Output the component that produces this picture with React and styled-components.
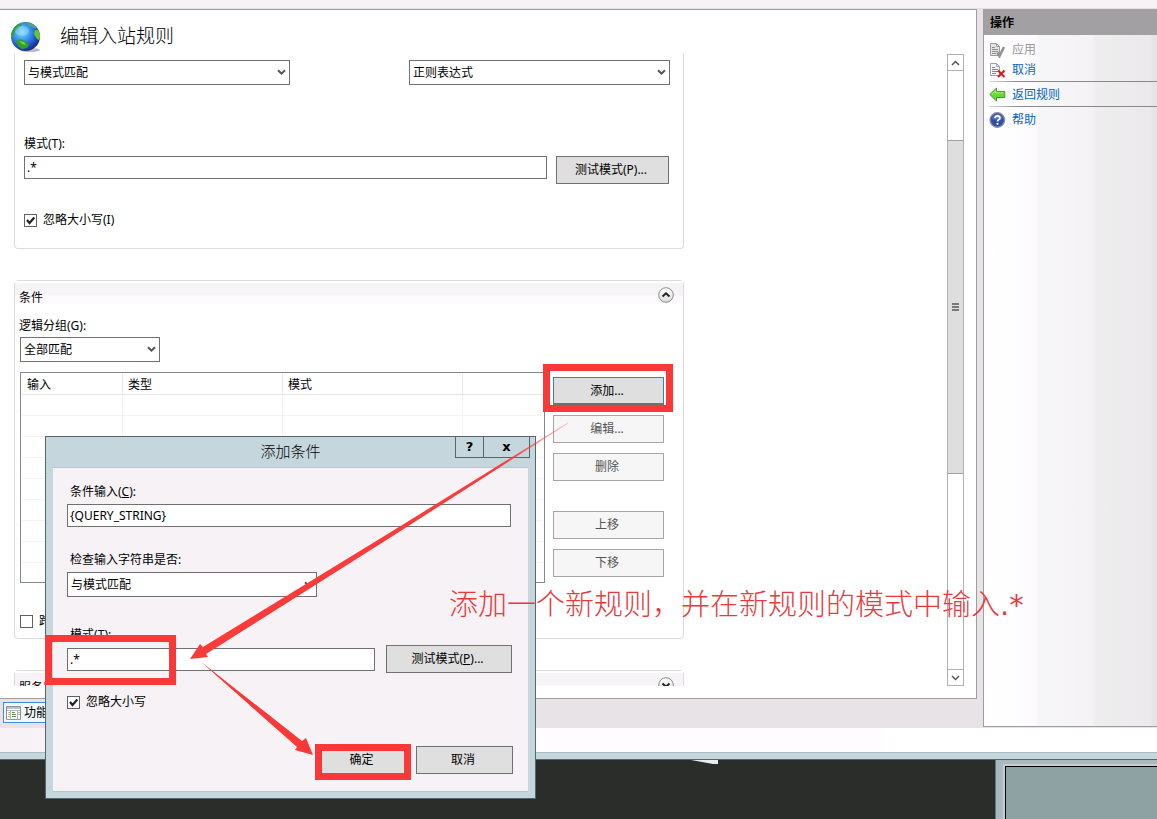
import React from 'react';
import styled, { createGlobalStyle } from 'styled-components';

const GlobalStyle = createGlobalStyle`
	* {
		box-sizing: border-box;
	}

	body {
		margin: 0;
		color: #000;
		font-family: 'Noto Sans', 'Noto Sans CJK SC', sans-serif;
		font-size: 12px;
		line-height: 16px;
	}

	button,
	input,
	select {
		font: inherit;
		color: inherit;
	}
`;

const Screen = styled.div`
	position: relative;
	display: flex;
	flex-direction: column;
	height: 100vh;
	overflow: hidden;
	background: #2b2d2a;
`;

const AppWindow = styled.div`
	flex: 1;
	min-height: 0;
	display: flex;
	flex-direction: column;
	background: #fffcff;
	border-bottom: 1px solid #53666c;
`;

const TopStrip = styled.div`
	height: 9px;
	background: #f6f2f6;
	border-bottom: 1px solid #e4e1e4;
`;

const Workspace = styled.div`
	flex: 1;
	min-height: 0;
	display: grid;
	grid-template-columns: 1fr 174px;
	column-gap: 6px;
	background: #e7e3e6;
`;

const MainColumn = styled.div`
	display: flex;
	flex-direction: column;
	min-height: 0;
`;

const RulePage = styled.main`
	flex: 1;
	min-height: 0;
	display: flex;
	flex-direction: column;
	padding-bottom: 12px;
	background: #fff;
	border: solid #a09da0;
	border-width: 1px 1px 1px 0;
`;

const PageHeader = styled.header`
	display: flex;
	align-items: center;
	flex: none;
	height: 44px;
	padding: 10px 0 0 10px;

	h1 {
		margin: 0 0 2px 18px;
		font-size: 19px;
		font-weight: 300;
		line-height: 24px;
	}
`;

const ScrollArea = styled.div`
	flex: 1;
	min-height: 0;
	display: flex;
	justify-content: space-between;
	padding: 0 12px 0 14px;
`;

const Sections = styled.div`
	width: 670px;
	overflow: hidden;
`;

const Section = styled.section`
	border: 1px solid #dcdcdc;
	border-radius: 4px;
	margin-bottom: 31px;
`;

const PatternSection = styled(Section)`
	border-top: 0;
	border-top-left-radius: 0;
	border-top-right-radius: 0;
	padding: 6px 13px 20px 9px;
`;

const SelectPair = styled.div`
	display: flex;
	justify-content: space-between;
	margin-bottom: 51px;
`;

const SelectWrap = styled.div`
	position: relative;
	width: ${(props) => props.$width}px;

	select {
		appearance: none;
		display: block;
		width: 100%;
		height: 25px;
		padding: 0 20px 0 3px;
		background: #fff;
		border: 1px solid #707070;
		border-radius: 0;
	}

	svg {
		position: absolute;
		right: 4px;
		top: 9px;
		pointer-events: none;
	}
`;

const FieldLabel = styled.label`
	display: block;
	line-height: 16px;
`;

const TextBox = styled.input`
	display: block;
	flex: 1;
	width: 100%;
	min-width: 0;
	height: 23px;
	padding: 0 2px;
	background: #fff;
	border: 1px solid #707070;
	border-radius: 0;
`;

const FieldRow = styled.div`
	display: flex;
	align-items: ${(props) => props.$align || 'center'};
	gap: ${(props) => props.$gap}px;
	margin-top: ${(props) => props.$top}px;
	padding-right: ${(props) => props.$inset || 0}px;
`;

const Button = styled.button`
	flex: none;
	width: ${(props) => props.$width}px;
	height: 28px;
	padding: 0 3px 0 0;
	line-height: 16px;
	background: #dfdfdf;
	border: 1px solid #707070;

	&:disabled {
		color: #555;
		background: #f6f6f6;
		border-color: #a5a5a8;
	}
`;

const AddButton = styled(Button)`
	border-color: #3c7fb1 #3c7fb1 #707070;
	box-shadow: inset 0 -1px #707070;
`;

const CheckLabel = styled.label`
	display: flex;
	align-items: center;
	gap: 6px;
	height: 16px;
	margin-top: ${(props) => props.$top}px;
	white-space: nowrap;

	span {
		display: grid;
	}

	input {
		appearance: none;
		grid-area: 1 / 1;
		width: 13px;
		height: 13px;
		margin: 0;
		background: #fff;
		border: 1px solid #606060;
	}

	svg {
		grid-area: 1 / 1;
		pointer-events: none;
	}
`;

const SectionHeader = styled.div`
	display: flex;
	align-items: center;
	justify-content: space-between;
	height: 28px;
	padding: 0 9px 0 4px;
	background: linear-gradient(#fff 2px, #f7f4f8 2px, #f7f4f8 14px, #fdfbfd 15px, #fdfbfd 22px, #fff 23px);

	h2 {
		margin: 6px 0 0;
		font-size: 12px;
		font-weight: 400;
		line-height: 16px;
	}

	button {
		display: block;
		width: 16px;
		height: 16px;
		padding: 0;
		background: none;
		border: 0;
	}

	svg {
		display: block;
	}
`;

const ConditionBody = styled.div`
	padding: 9px 19px 9px 5px;

	> label {
		margin-left: -1px;
	}

	> label:last-child {
		margin-left: 0;
	}
`;

const ConditionGrid = styled.div`
	display: grid;
	grid-template-columns: 1fr 111px;
	column-gap: 8px;
	margin-top: 10px;
`;

const ConditionTable = styled.table`
	width: 100%;
	height: 211px;
	padding: 1px;
	table-layout: fixed;
	border: 1px solid #828790;
	border-spacing: 0;

	th {
		height: 21px;
		padding: 1px 5px 0;
		font-weight: 400;
		text-align: left;
		border: solid #e5e5e5;
		border-width: 0 1px 1px 0;
	}

	th:last-child,
	td:last-child {
		border-right: 0;
	}

	td {
		height: 21px;
		padding: 0;
		border: solid #f3f3f3;
		border-width: 0 1px 1px 0;
	}

	tr:last-child td {
		height: auto;
		border-bottom: 0;
	}
`;

const ButtonColumn = styled.div`
	display: flex;
	flex-direction: column;
	gap: 10px;
	padding-top: 5px;

	button:nth-child(4) {
		margin-top: 20px;
	}
`;

const ScrollBar = styled.div`
	display: flex;
	flex-direction: column;
	width: 17px;
	border: 1px solid #b0b0b0;

	button {
		display: grid;
		place-items: center;
		flex: none;
		height: 16px;
		padding: 0;
		background: #fff;
		border: 0 solid #b0b0b0;
	}

	button:first-child {
		border-bottom-width: 1px;
	}

	button:last-child {
		border-top-width: 1px;
	}
`;

const Track = styled.div`
	flex: 1;
	display: grid;
	grid-template-rows: 69fr 334fr 195fr;
`;

const Thumb = styled.div`
	grid-row: 2;
	display: grid;
	place-items: center;
	background: #dedede;
	border: solid #a0a0a0;
	border-width: 1px 0;
`;

const ViewTabs = styled.div`
	display: flex;
	flex: none;
	height: 29px;
	padding: 3px;
`;

const ViewTab = styled.button`
	display: flex;
	align-items: center;
	gap: 2px;
	height: 21px;
	padding: 0 4px 0 1px;
	background: #f2f7fb;
	border: 1px solid #3d8fdc;
`;

const ActionsPane = styled.aside`
	margin-bottom: 1px;
	background: linear-gradient(
		90deg,
		#fff 0,
		#fdfbfe 50px,
		#f6f6f7 56px,
		#f5f2f5 108px,
		#eeeeee 112px,
		#ece9ec 166px,
		#e5e3e5 170px
	);
	border: solid #a09da0;
	border-width: 0 0 1px 1px;

	h2 {
		margin: 0;
		padding: 6px 6px 4px;
		font-size: 12px;
		line-height: 16px;
		background: #a3a0a3;
	}

	ul {
		margin: 0;
		padding: 5px 0 0 5px;
		list-style: none;
	}

	li {
		height: 20px;
	}

	li:nth-child(2) {
		height: 21px;
	}

	li.divided {
		height: 25px;
		padding-top: 3px;
		border-top: 1px solid;
		border-image: linear-gradient(90deg, #ddd, #8a888a 30px) 1;
	}
`;

const ActionLink = styled.a`
	display: flex;
	align-items: center;
	gap: 6px;
	height: 20px;
	color: ${(props) => (props.$disabled ? '#9a979a' : '#0563c1')};
	text-decoration: none;
`;

const StatusBar = styled.div`
	flex: none;
	height: 24px;
	background: linear-gradient(90deg, #f6f2f6 0, #fffcff 45%, #fffcff 76%, #fff 77%);
`;

const WindowFrame = styled.div`
	flex: none;
	height: 7px;
	background: #c5d6dc;
	border-top: 1px solid #a9bcc3;
`;

const Desktop = styled.div`
	flex: none;
	display: flex;
	justify-content: flex-end;
	height: 59px;
`;

const DesktopMark = styled.svg`
	margin-right: 276px;
`;

const BackWindow = styled.div`
	width: 162px;
	padding: 6px 0 0 9px;
	background: #a9b9bf;
	border-left: 1px solid #60757c;

	div {
		height: 100%;
		background: #8ea2a4;
		border: solid #000;
		border-width: 1px 0 0 1px;
		box-shadow: 0 0 0 2px #c5ced2;
	}
`;

const Dialog = styled.div`
	position: absolute;
	left: 45px;
	top: 436px;
	width: 491px;
	padding: 0 7px 6px;
	background: #c5d6dc;
	border: 1px solid #53666c;
`;

const DialogBar = styled.div`
	display: grid;
	grid-template-columns: 75px 1fr 75px;
	height: 30px;

	h2 {
		grid-column: 2;
		margin: 4px 0 0;
		font-size: 15px;
		font-weight: 300;
		line-height: 20px;
		text-align: center;
	}

	div {
		display: flex;
		justify-content: flex-end;
		height: 21px;
		margin-right: -2px;
	}
`;

const CaptionButton = styled.button`
	width: ${(props) => props.$width}px;
	padding: 0;
	font-family: 'DejaVu Sans', sans-serif;
	font-size: 13px;
	font-weight: 700;
	background: transparent;
	border: solid #53666c;
	border-width: 0 1px 1px 0;

	&:first-child {
		border-left-width: 1px;
	}
`;

const DialogBody = styled.form`
	padding: 16px 15px 17px 14px;
	background: #f6f2f6;
	border-top: 1px solid #b5c4ca;
	border-bottom: 1px solid #b5c4ca;
`;

const DialogField = styled.div`
	margin-bottom: ${(props) => props.$bottom}px;
	padding-right: 2px;

	label {
		padding-left: 3px;
		margin-bottom: 4px;
	}
`;

const DialogActions = styled.div`
	display: flex;
	justify-content: flex-end;
	gap: 8px;
	margin-top: 36px;
`;

const Markup = styled.svg`
	position: absolute;
	left: 0;
	top: 0;
	pointer-events: none;
`;

const MarkupNote = styled.p`
	position: absolute;
	left: 449px;
	top: 584px;
	margin: 0;
	color: #e8393c;
	font-family: 'Noto Sans CJK SC', sans-serif;
	font-size: 29px;
	font-weight: 300;
	line-height: 36px;
	white-space: nowrap;
	pointer-events: none;

	span {
		font-family: 'DejaVu Sans', sans-serif;
		font-weight: 400;
	}
`;

const SelectArrow = () => (
	<svg width='9' height='7' viewBox='0 0 9 7'>
		<path d='M1 1.2 L4.5 4.7 L8 1.2' fill='none' stroke='#555' strokeWidth='2' />
	</svg>
);

const Select = ({ id, label, width, value }) => (
	<SelectWrap $width={width}>
		<select id={id} aria-label={label} defaultValue={value}>
			<option>{value}</option>
		</select>
		<SelectArrow />
	</SelectWrap>
);

const Check = ({ top, checked, children }) => (
	<CheckLabel $top={top}>
		<span>
			<input type='checkbox' defaultChecked={checked} />
			{checked && (
				<svg width='13' height='13' viewBox='0 0 13 13'>
					<path d='M3 6 L5.5 9 L10.3 3.5' fill='none' stroke='#222' strokeWidth='2.2' />
				</svg>
			)}
		</span>
		{children}
	</CheckLabel>
);

const RoundChevron = ({ up }) => (
	<svg width='16' height='16' viewBox='0 0 16 16'>
		<defs>
			<linearGradient id='round' x1='0' y1='0' x2='0' y2='1'>
				<stop offset='0' stopColor='#fff' />
				<stop offset='1' stopColor='#dcdcdc' />
			</linearGradient>
		</defs>
		<circle cx='8' cy='8' r='7.3' fill='url(#round)' stroke='#8c8c8c' />
		<path
			d={up ? 'M4.5 9.5 L8 6.3 L11.5 9.5' : 'M4.5 6.5 L8 9.7 L11.5 6.5'}
			fill='none'
			stroke='#222'
			strokeWidth='2'
		/>
	</svg>
);

const Globe = () => (
	<svg width='32' height='32' viewBox='0 0 32 32'>
		<defs>
			<radialGradient id='sea' cx='0.38' cy='0.35' r='0.68'>
				<stop offset='0' stopColor='#7fdcfc' />
				<stop offset='0.4' stopColor='#3a9aee' />
				<stop offset='0.75' stopColor='#2450cc' />
				<stop offset='1' stopColor='#172a80' />
			</radialGradient>
			<linearGradient id='land' x1='0' y1='0' x2='1' y2='1'>
				<stop offset='0' stopColor='#2f8f4a' />
				<stop offset='1' stopColor='#3fae4a' />
			</linearGradient>
			<clipPath id='disc'>
				<circle cx='15.5' cy='15.5' r='14.5' />
			</clipPath>
		</defs>
		<ellipse cx='20' cy='29' rx='10' ry='2' fill='#b8bcc4' />
		<circle cx='15.5' cy='15.5' r='14.5' fill='url(#sea)' />
		<g clipPath='url(#disc)'>
			<path d='M0 16 L2 8 L7 3 L12 2 L11 5 L9 6 L7 9 L5 10 L4 14 L2 18z' fill='url(#land)' />
			<path d='M15 0 L22 1 L27 6 L25 8 L22 6 L19 5 L17 3z' fill='#49a58b' />
			<path d='M25 9 L28 9 L31 15 L29 19 L27 18 L24 13z' fill='#62c62e' />
			<path d='M6 20 L10 18 L15 20 L19 24 L17 27 L12 28 L8 25z' fill='#2fa12b' />
			<path d='M9 20 L14 21 L16 24 L12 23z' fill='#7ad23c' />
			<ellipse cx='12' cy='10' rx='7' ry='5' fill='#c5f3ff' opacity='0.3' />
		</g>
	</svg>
);

const PageIcon = ({ gray }) => (
	<>
		<path d='M1.5 1.5 h6 l3 3 v9 h-9z' fill={gray ? '#e4e4e4' : '#f4f8fb'} stroke={gray ? '#9b9b9b' : '#98a4ad'} />
		<path d='M7.5 1.5 v3 h3' fill='none' stroke={gray ? '#9b9b9b' : '#98a4ad'} />
		<path d='M3 5.5 h3 M3 7.5 h6 M3 9.5 h6 M3 11.5 h4' stroke={gray ? '#8d8d8d' : '#5f8fb8'} />
	</>
);

const ApplyIcon = () => (
	<svg width='17' height='16' viewBox='0 0 17 16'>
		<PageIcon gray />
		<path d='M8.5 10.5 L10.5 14 L15 5' fill='none' stroke='#929292' strokeWidth='2.6' />
	</svg>
);

const CancelIcon = () => (
	<svg width='17' height='16' viewBox='0 0 17 16'>
		<PageIcon />
		<path d='M9 8.5 L15.5 15 M15.5 8.5 L9 15' stroke='#d91c1c' strokeWidth='2' />
	</svg>
);

const BackIcon = () => (
	<svg width='17' height='16' viewBox='0 0 17 16'>
		<path d='M0.8 7.5 L7.5 1 V4.5 H15.8 V10.5 H7.5 V14z' fill='#62dc35' stroke='#3b9e2c' />
		<path d='M3 7.2 L6.8 3.6 V5.8 H14.6' fill='none' stroke='#a8f184' />
	</svg>
);

const HelpIcon = () => (
	<svg width='17' height='16' viewBox='0 0 17 16'>
		<circle cx='8.3' cy='8' r='7.2' fill='#2c4fa8' stroke='#83899e' strokeWidth='1.4' />
		<path d='M2.7 7 a5.7 5.7 0 0 1 11.2 0 q-5 2.5 -11.2 0' fill='#5577cc' opacity='0.7' />
		<path
			d='M6 6.2 q0.2 -2.2 2.5 -2.2 q2.4 0 2.4 1.9 q0 1.2 -1.3 1.9 q-1 0.6 -1 1.6'
			fill='none'
			stroke='#fff'
			strokeWidth='1.8'
		/>
		<circle cx='8.5' cy='11.8' r='1.1' fill='#fff' />
	</svg>
);

const FeatureIcon = () => (
	<svg width='17' height='16' viewBox='0 0 17 16'>
		<path d='M1.5 1.5 h14 v13 h-14z' fill='#fff' stroke='#8796a2' />
		<path d='M2 2.5 h13 M2 3.5 h13' stroke='#b8c2ca' />
		<path d='M2 5.5 h13 M5.5 5 v9.5 M12.5 5 v9.5' stroke='#b8b8b8' />
		<path d='M3 7.5 h2 M3 9.5 h2 M3 11.5 h2 M13 7.5 h2 M13 9.5 h2' stroke='#c9b98c' />
		<path d='M7 7.5 h3 M7 9.5 h4 M7 11.5 h4' stroke='#5d9160' />
	</svg>
);

const EMPTY_ROWS = [1, 2, 3, 4, 5, 6, 7, 8, 9];

const PatternPanel = () => (
	<PatternSection>
		<SelectPair>
			<Select width={266} label='请求的 URL' value='与模式匹配' />
			<Select width={261} label='使用' value='正则表达式' />
		</SelectPair>
		<FieldLabel htmlFor='pattern'>模式(T):</FieldLabel>
		<FieldRow $align='flex-start' $gap={9} $top={4} $inset={1}>
			<TextBox id='pattern' defaultValue='.*' />
			<Button $width={113}>测试模式(P)...</Button>
		</FieldRow>
		<Check top={28} checked>
			忽略大小写(I)
		</Check>
	</PatternSection>
);

const ConditionsPanel = () => (
	<Section>
		<SectionHeader>
			<h2>条件</h2>
			<button aria-label='折叠'>
				<RoundChevron up />
			</button>
		</SectionHeader>
		<ConditionBody>
			<FieldLabel htmlFor='grouping'>逻辑分组(G):</FieldLabel>
			<FieldRow $top={3}>
				<Select id='grouping' width={140} value='全部匹配' />
			</FieldRow>
			<ConditionGrid>
				<ConditionTable>
					<colgroup>
						<col width='101' />
						<col width='160' />
						<col width='180' />
						<col />
					</colgroup>
					<thead>
						<tr>
							<th>输入</th>
							<th>类型</th>
							<th>模式</th>
							<th />
						</tr>
					</thead>
					<tbody>
						{EMPTY_ROWS.map((row) => (
							<tr key={row}>
								<td />
								<td />
								<td />
								<td />
							</tr>
						))}
					</tbody>
				</ConditionTable>
				<ButtonColumn>
					<AddButton $width={111}>添加...</AddButton>
					<Button $width={111} disabled>编辑...</Button>
					<Button $width={111} disabled>删除</Button>
					<Button $width={111} disabled>上移</Button>
					<Button $width={111} disabled>下移</Button>
				</ButtonColumn>
			</ConditionGrid>
			<Check top={30}>跨条件跟踪捕获组(A)</Check>
		</ConditionBody>
	</Section>
);

const Actions = () => (
	<ActionsPane>
		<h2>操作</h2>
		<ul>
			<li>
				<ActionLink $disabled href='#!'>
					<ApplyIcon />
					应用
				</ActionLink>
			</li>
			<li>
				<ActionLink href='#!'>
					<CancelIcon />
					取消
				</ActionLink>
			</li>
			<li className='divided'>
				<ActionLink href='#!'>
					<BackIcon />
					返回规则
				</ActionLink>
			</li>
			<li className='divided'>
				<ActionLink href='#!'>
					<HelpIcon />
					帮助
				</ActionLink>
			</li>
		</ul>
	</ActionsPane>
);

const ConditionDialog = () => (
	<Dialog role='dialog' aria-labelledby='dialog-title'>
		<DialogBar>
			<h2 id='dialog-title'>添加条件</h2>
			<div>
				<CaptionButton $width={29}>?</CaptionButton>
				<CaptionButton $width={46}>x</CaptionButton>
			</div>
		</DialogBar>
		<DialogBody onSubmit={(e) => e.preventDefault()}>
			<DialogField $bottom={25}>
				<FieldLabel htmlFor='condition-input'>
					条件输入(<u>C</u>):
				</FieldLabel>
				<TextBox id='condition-input' defaultValue='{QUERY_STRING}' />
			</DialogField>
			<DialogField $bottom={30}>
				<FieldLabel htmlFor='condition-check'>检查输入字符串是否:</FieldLabel>
				<Select id='condition-check' width={250} value='与模式匹配' />
			</DialogField>
			<FieldLabel htmlFor='condition-pattern'>&nbsp;模式(T):</FieldLabel>
			<FieldRow $gap={11} $top={2} $inset={1}>
				<TextBox id='condition-pattern' defaultValue='.*' />
				<Button type='button' $width={126}>
					测试模式(<u>P</u>)...
				</Button>
			</FieldRow>
			<Check top={21} checked>
				忽略大小写
			</Check>
			<DialogActions>
				<Button type='submit' $width={90}>确定</Button>
				<Button type='button' $width={97}>取消</Button>
			</DialogActions>
		</DialogBody>
	</Dialog>
);

const Annotations = () => (
	<>
		<Markup width='700' height='800' viewBox='0 0 700 800'>
			<defs>
				<linearGradient id='tail' gradientUnits='userSpaceOnUse' x1='568' y1='423' x2='500' y2='465'>
					<stop offset='0' stopColor='#fb3a3a' stopOpacity='0.3' />
					<stop offset='1' stopColor='#fb3a3a' />
				</linearGradient>
			</defs>
			<g fill='none' stroke='#fb3838' strokeWidth='7'>
				<rect x='546.5' y='367.5' width='123' height='41' />
				<rect x='48.5' y='638.5' width='124' height='43' />
				<rect x='318.5' y='747.5' width='89' height='29' />
			</g>
			<path
				d='M568 422.5 L386 535 L203 647 L200 644 L190 659 L208 657 L206 654 L388 539 L568 423.5z'
				fill='url(#tail)'
			/>
			<path d='M200 661 L302 741 L306 738 L313 755 L295 750 L297 747z' fill='#fb3838' />
		</Markup>
		<MarkupNote>
			添加一个新规则，并在新规则的模式中输入<span>.*</span>
		</MarkupNote>
	</>
);

const App = () => {
	return (
		<Screen>
			<GlobalStyle />
			<AppWindow>
				<TopStrip />
				<Workspace>
					<MainColumn>
						<RulePage>
							<PageHeader>
								<Globe />
								<h1>编辑入站规则</h1>
							</PageHeader>
							<ScrollArea>
								<Sections>
									<PatternPanel />
									<ConditionsPanel />
									<Section>
										<SectionHeader>
											<h2>服务器变量</h2>
											<button aria-label='展开'>
												<RoundChevron />
											</button>
										</SectionHeader>
									</Section>
								</Sections>
								<ScrollBar>
									<button aria-label='向上滚动'>
										<svg width='9' height='6' viewBox='0 0 9 6'>
											<path d='M1 5 L4.5 1.5 L8 5' fill='none' stroke='#555' strokeWidth='1.5' />
										</svg>
									</button>
									<Track>
										<Thumb>
											<svg width='7' height='8' viewBox='0 0 7 8'>
												<path d='M0 1 h7 M0 4 h7 M0 7 h7' stroke='#555' strokeWidth='1.6' />
											</svg>
										</Thumb>
									</Track>
									<button aria-label='向下滚动'>
										<svg width='9' height='6' viewBox='0 0 9 6'>
											<path d='M1 1 L4.5 4.5 L8 1' fill='none' stroke='#555' strokeWidth='1.5' />
										</svg>
									</button>
								</ScrollBar>
							</ScrollArea>
						</RulePage>
						<ViewTabs>
							<ViewTab>
								<FeatureIcon />
								功能视图
							</ViewTab>
						</ViewTabs>
					</MainColumn>
					<Actions />
				</Workspace>
				<StatusBar />
				<WindowFrame />
			</AppWindow>
			<Desktop>
				<DesktopMark width='28' height='4' viewBox='0 0 28 4'>
					<path d='M0 0 H27 V4 H22z' fill='#e8edef' />
				</DesktopMark>
				<BackWindow>
					<div />
				</BackWindow>
			</Desktop>
			<ConditionDialog />
			<Annotations />
		</Screen>
	);
};

export default App;
